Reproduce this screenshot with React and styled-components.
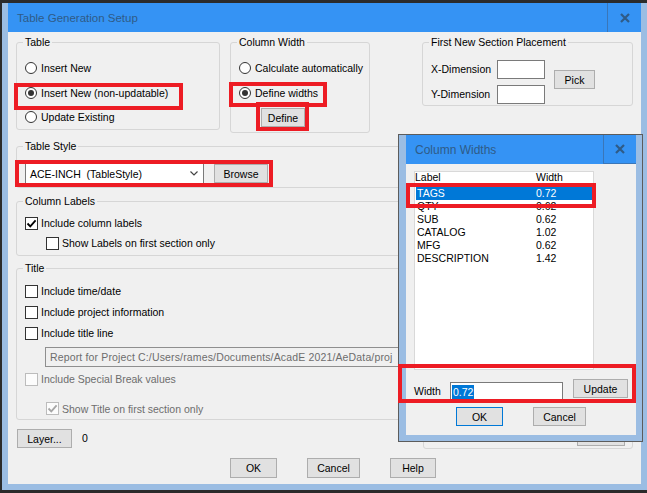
import React from "react";
import styled, { createGlobalStyle } from "styled-components";

const Global = createGlobalStyle`
  html, body { margin: 0; padding: 0; background: #2b2b2b; }
  body {
    width: 647px; height: 493px; overflow: hidden;
    font-family: "Liberation Sans", Arial, sans-serif;
    font-size: 10.5px; color: #000;
  }
  * { box-sizing: border-box; }
`;

const Desktop = styled.div`
  position: relative;
  width: 647px;
  height: 493px;
  background: #2b2b2b;
  overflow: hidden;
`;

const Window = styled.div`
  position: absolute;
  left: ${(p) => p.$x}px;
  top: ${(p) => p.$y}px;
  width: ${(p) => p.$w}px;
  height: ${(p) => p.$h}px;
  background: #9bbde3;
  border: ${(p) => (p.$outlined ? "1px solid #5c5c5c" : "none")};
  padding: 0 ${(p) => p.$fr}px ${(p) => p.$fb}px ${(p) => p.$fl}px;
  display: flex;
  flex-direction: column;
`;

const TitleBar = styled.div`
  height: 29px;
  flex: none;
  background: #3593f4;
  display: flex;
  align-items: center;
`;

const TitleText = styled.div`
  flex: 1;
  padding-left: 9px;
  font-size: ${(p) => p.$size}px;
  color: #2f5b87;
  white-space: nowrap;
`;

const CloseBox = styled.div`
  width: ${(p) => p.$w}px;
  height: 100%;
  border-left: 1px solid #3a76b8;
  border-bottom: ${(p) => (p.$bottomLine ? "1px solid #3a76b8" : "none")};
  display: flex;
  align-items: center;
  justify-content: center;
`;

const Body = styled.div`
  flex: 1;
  background: #f0f0f0;
  display: flex;
  flex-direction: column;
  padding: ${(p) => p.$pad};
`;

const Row = styled.div`
  display: flex;
  align-items: ${(p) => p.$align || "flex-start"};
  margin-top: ${(p) => p.$mt || 0}px;
  margin-left: ${(p) => p.$ml || 0}px;
  padding-left: ${(p) => p.$pl || 0}px;
  padding-bottom: ${(p) => p.$pb || 0}px;
`;

const Column = styled.div`
  display: flex;
  flex-direction: column;
  gap: ${(p) => p.$gap || 0}px;
  margin-top: ${(p) => p.$mt || 0}px;
`;

const Group = styled.fieldset`
  margin: ${(p) => p.$mt || 0}px 0 0 ${(p) => p.$ml || 0}px;
  padding: ${(p) => p.$pt ?? 10}px 8px 0 8px;
  border: 1px solid #d6d6d6;
  border-radius: 3px;
  width: ${(p) => p.$w}px;
  height: ${(p) => p.$h}px;
  min-width: 0;
  flex: none;
  display: flex;
  flex-direction: column;
  justify-content: ${(p) => p.$justify || "flex-start"};
`;

const Legend = styled.legend`
  padding: 0 2px;
  margin-left: -2px;
  line-height: 12px;
  font-size: 10.5px;
`;

const OptionRow = styled.div`
  display: flex;
  align-items: center;
  height: ${(p) => p.$h || 16}px;
  gap: ${(p) => p.$gap ?? 4}px;
  margin-top: ${(p) => p.$mt || 0}px;
  margin-left: ${(p) => p.$indent || 0}px;
  color: ${(p) => (p.$disabled ? "#6d6d6d" : "#000")};
  white-space: nowrap;
`;

const RadioCircle = styled.span`
  width: 12px;
  height: 12px;
  flex: none;
  border-radius: 50%;
  border: 1px solid #333;
  background: #fff;
  display: flex;
  align-items: center;
  justify-content: center;
  &::after {
    content: "";
    width: 6px;
    height: 6px;
    border-radius: 50%;
    background: ${(p) => (p.$on ? "#333" : "transparent")};
  }
`;

const CheckBox = styled.span`
  width: 13px;
  height: 13px;
  flex: none;
  border: 1px solid ${(p) => (p.$disabled ? "#bcbcbc" : "#333")};
  background: ${(p) => (p.$disabled ? "#fcfcfc" : "#fff")};
  display: flex;
  align-items: center;
  justify-content: center;
`;

const Button = styled.div`
  width: ${(p) => p.$w}px;
  height: ${(p) => p.$h || 19}px;
  flex: none;
  margin-left: ${(p) => p.$ml || 0}px;
  margin-top: ${(p) => p.$mt || 0}px;
  background: #e1e1e1;
  border: 1px solid ${(p) => (p.$default ? "#0078d7" : "#adadad")};
  display: flex;
  align-items: center;
  justify-content: center;
  white-space: nowrap;
`;

const TextBox = styled.div`
  width: ${(p) => p.$w}px;
  height: ${(p) => p.$h || 19}px;
  flex: none;
  margin-left: ${(p) => p.$ml || 0}px;
  margin-top: ${(p) => p.$mt || 0}px;
  background: ${(p) => (p.$disabled ? "#f0f0f0" : "#fff")};
  border: 1px solid ${(p) => (p.$disabled ? "#8f8f8f" : "#7a7a7a")};
  color: ${(p) => (p.$disabled ? "#6d6d6d" : "#000")};
  letter-spacing: ${(p) => (p.$disabled ? "0.15px" : "normal")};
  display: flex;
  align-items: center;
  padding-left: ${(p) => p.$pl ?? 4}px;
  white-space: nowrap;
  overflow: hidden;
`;

const FieldLabel = styled.div`
  width: ${(p) => p.$w}px;
  flex: none;
  margin-left: ${(p) => p.$ml || 0}px;
  margin-top: ${(p) => p.$mt || 0}px;
  height: 19px;
  line-height: 19px;
  white-space: nowrap;
`;

const Combo = styled.div`
  width: 179px;
  height: 21px;
  flex: none;
  background: #fff;
  border: 1px solid #7a7a7a;
  display: flex;
  align-items: center;
  justify-content: space-between;
  padding: 0 5px 0 4px;
  white-space: pre;
`;

const PlainText = styled.div`
  margin-left: ${(p) => p.$ml || 0}px;
  line-height: 19px;
  white-space: nowrap;
`;

const ListBox = styled.div`
  width: 180px;
  height: 199px;
  margin: 7px 0 0 8px;
  flex: none;
  background: #fff;
  border: 1px solid #d9d9d9;
  display: flex;
  flex-direction: column;
`;

const ListHeader = styled.div`
  display: flex;
  height: 15px;
  line-height: 10px;
  flex: none;
`;

const ListRow = styled.div`
  display: flex;
  height: 13px;
  line-height: 13px;
  margin-left: 1px;
  width: 176px;
  padding-left: 1px;
  background: ${(p) => (p.$selected ? "#0078d7" : "transparent")};
  color: ${(p) => (p.$selected ? "#fff" : "#000")};
  white-space: nowrap;
`;

const Cell = styled.span`
  width: ${(p) => p.$w}px;
  flex: none;
`;

const Selection = styled.span`
  background: #0078d7;
  color: #fff;
  line-height: 14px;
  padding: 0 1px;
`;

const Mark = styled.div`
  position: absolute;
  left: ${(p) => p.$x}px;
  top: ${(p) => p.$y}px;
  width: ${(p) => p.$w}px;
  height: ${(p) => p.$h}px;
  border: 4px solid #ed1c24;
  pointer-events: none;
`;

const CloseX = () => (
  <svg width="10" height="10" viewBox="0 0 10 10">
    <path d="M1 1 L9 9 M9 1 L1 9" stroke="#2f5b87" strokeWidth="2.2" fill="none" />
  </svg>
);

const Check = ({ color }) => (
  <svg width="11" height="11" viewBox="0 0 11 11">
    <path d="M1.5 5.5 L4.3 8.4 L9.6 2.4" stroke={color} strokeWidth="1.8" fill="none" />
  </svg>
);

const Chevron = () => (
  <svg width="8" height="5" viewBox="0 0 8 5">
    <path d="M0.5 0.5 L4 4 L7.5 0.5" stroke="#444" strokeWidth="1.2" fill="none" />
  </svg>
);

const Radio = ({ label, on, mt }) => (
  <OptionRow $mt={mt}>
    <RadioCircle $on={on} />
    <span>{label}</span>
  </OptionRow>
);

const CheckRow = ({ label, checked, disabled, indent, mt }) => (
  <OptionRow $h={14} $gap={3} $indent={indent} $mt={mt} $disabled={disabled}>
    <CheckBox $disabled={disabled}>
      {checked && <Check color={disabled ? "#a6a6a6" : "#000"} />}
    </CheckBox>
    <span>{label}</span>
  </OptionRow>
);

const columns = [
  ["TAGS", "0.72"],
  ["QTY", "0.62"],
  ["SUB", "0.62"],
  ["CATALOG", "1.02"],
  ["MFG", "0.62"],
  ["DESCRIPTION", "1.42"],
];

export default function App() {
  return (
    <>
      <Global />
      <Desktop>
        <Window $x={2} $y={3} $w={645} $h={487} $fl={6} $fr={6} $fb={6}>
          <TitleBar>
            <TitleText $size={11.5}>Table Generation Setup</TitleText>
            <CloseBox $w={34}>
              <CloseX />
            </CloseBox>
          </TitleBar>
          <Body $pad="4px 0 0 8px">
            <Row>
              <Group $w={204} $h={94} $pt={12}>
                <Legend>Table</Legend>
                <Column $gap={8.5}>
                  <Radio label="Insert New" />
                  <Radio label="Insert New (non-updatable)" on />
                  <Radio label="Update Existing" />
                </Column>
              </Group>
              <Group $w={140} $h={97} $pt={12} $ml={10}>
                <Legend>Column Width</Legend>
                <Column $gap={8.5}>
                  <Radio label="Calculate automatically" />
                  <Radio label="Define widths" on />
                </Column>
                <Button $w={44} $ml={22} $mt={7.5}>Define</Button>
              </Group>
              <Group $w={211} $h={70} $pt={12} $ml={52}>
                <Legend>First New Section Placement</Legend>
                <Row>
                  <Column $gap={6}>
                    <Row>
                      <FieldLabel $w={66}>X-Dimension</FieldLabel>
                      <TextBox $w={48} />
                    </Row>
                    <Row>
                      <FieldLabel $w={66}>Y-Dimension</FieldLabel>
                      <TextBox $w={48} />
                    </Row>
                  </Column>
                  <Button $w={41} $ml={9} $mt={10}>Pick</Button>
                </Row>
              </Group>
            </Row>

            <Group $w={617} $h={48} $pt={11} $mt={7}>
              <Legend>Table Style</Legend>
              <Row>
                <Combo>
                  <span>ACE-INCH  (TableStyle)</span>
                  <Chevron />
                </Combo>
                <Button $w={54} $ml={10} $mt={1}>Browse</Button>
              </Row>
            </Group>

            <Group $w={617} $h={61} $pt={9} $mt={7}>
              <Legend>Column Labels</Legend>
              <CheckRow label="Include column labels" checked />
              <CheckRow label="Show Labels on first section only" indent={21} mt={6} />
            </Group>

            <Row $mt={6}>
              <Column>
                <Group $w={399} $h={158} $pt={10}>
                  <Legend>Title</Legend>
                  <CheckRow label="Include time/date" />
                  <CheckRow label="Include project information" mt={7} />
                  <CheckRow label="Include title line" mt={7} />
                  <TextBox $w={362} $h={20} $ml={20} $mt={7} $disabled>
                    Report for Project C:/Users/rames/Documents/AcadE 2021/AeData/proj
                  </TextBox>
                  <CheckRow label="Include Special Break values" disabled mt={5} />
                  <CheckRow label="Show Title on first section only" disabled checked indent={21} mt={15.5} />
                </Group>
                <Row $mt={9} $align="center">
                  <Button $w={55} $ml={1}>Layer...</Button>
                  <PlainText $ml={10}>0</PlainText>
                </Row>
              </Column>
              <Group $w={210} $h={187} $pt={10} $ml={8} $justify="flex-end">
                <Row $align="flex-end" $pb={2}>
                  <PlainText $ml={1}>Allowance</PlainText>
                  <Button $w={48} $h={20} $ml={96}>...</Button>
                </Row>
              </Group>
            </Row>

            <Row $mt={9} $pl={214}>
              <Button $w={47} $h={20}>OK</Button>
              <Button $w={53} $h={20} $ml={30}>Cancel</Button>
              <Button $w={46} $h={20} $ml={30}>Help</Button>
            </Row>
          </Body>
        </Window>

        <Window $x={398} $y={134} $w={245} $h={308} $fl={7} $fr={6} $fb={6} $outlined>
          <TitleBar>
            <TitleText $size={12}>Column Widths</TitleText>
            <CloseBox $w={33} $bottomLine>
              <CloseX />
            </CloseBox>
          </TitleBar>
          <Body $pad="0">
            <ListBox>
              <ListHeader>
                <Cell $w={121}>Label</Cell>
                <Cell $w={50}>Width</Cell>
              </ListHeader>
              {columns.map(([label, width], i) => (
                <ListRow key={label} $selected={i === 0}>
                  <Cell $w={119}>{label}</Cell>
                  <Cell $w={50}>{width}</Cell>
                </ListRow>
              ))}
            </ListBox>
            <Row $mt={9}>
              <FieldLabel $w={36} $ml={8} $mt={3}>Width</FieldLabel>
              <TextBox $w={113} $mt={3} $pl={1}>
                <Selection>0.72</Selection>
              </TextBox>
              <Button $w={55} $ml={10}>Update</Button>
            </Row>
            <Row $mt={6} $pl={50}>
              <Button $w={47} $default>OK</Button>
              <Button $w={53} $ml={30}>Cancel</Button>
            </Row>
          </Body>
        </Window>

        <Mark $x={14} $y={83} $w={169} $h={27} />
        <Mark $x={229} $y={82} $w={98} $h={25} />
        <Mark $x={256} $y={102} $w={53} $h={29} />
        <Mark $x={15} $y={160} $w={258} $h={27} />
        <Mark $x={406} $y={183} $w={190} $h={25} />
        <Mark $x={398} $y={364} $w={238} $h={39} />
      </Desktop>
    </>
  );
}
